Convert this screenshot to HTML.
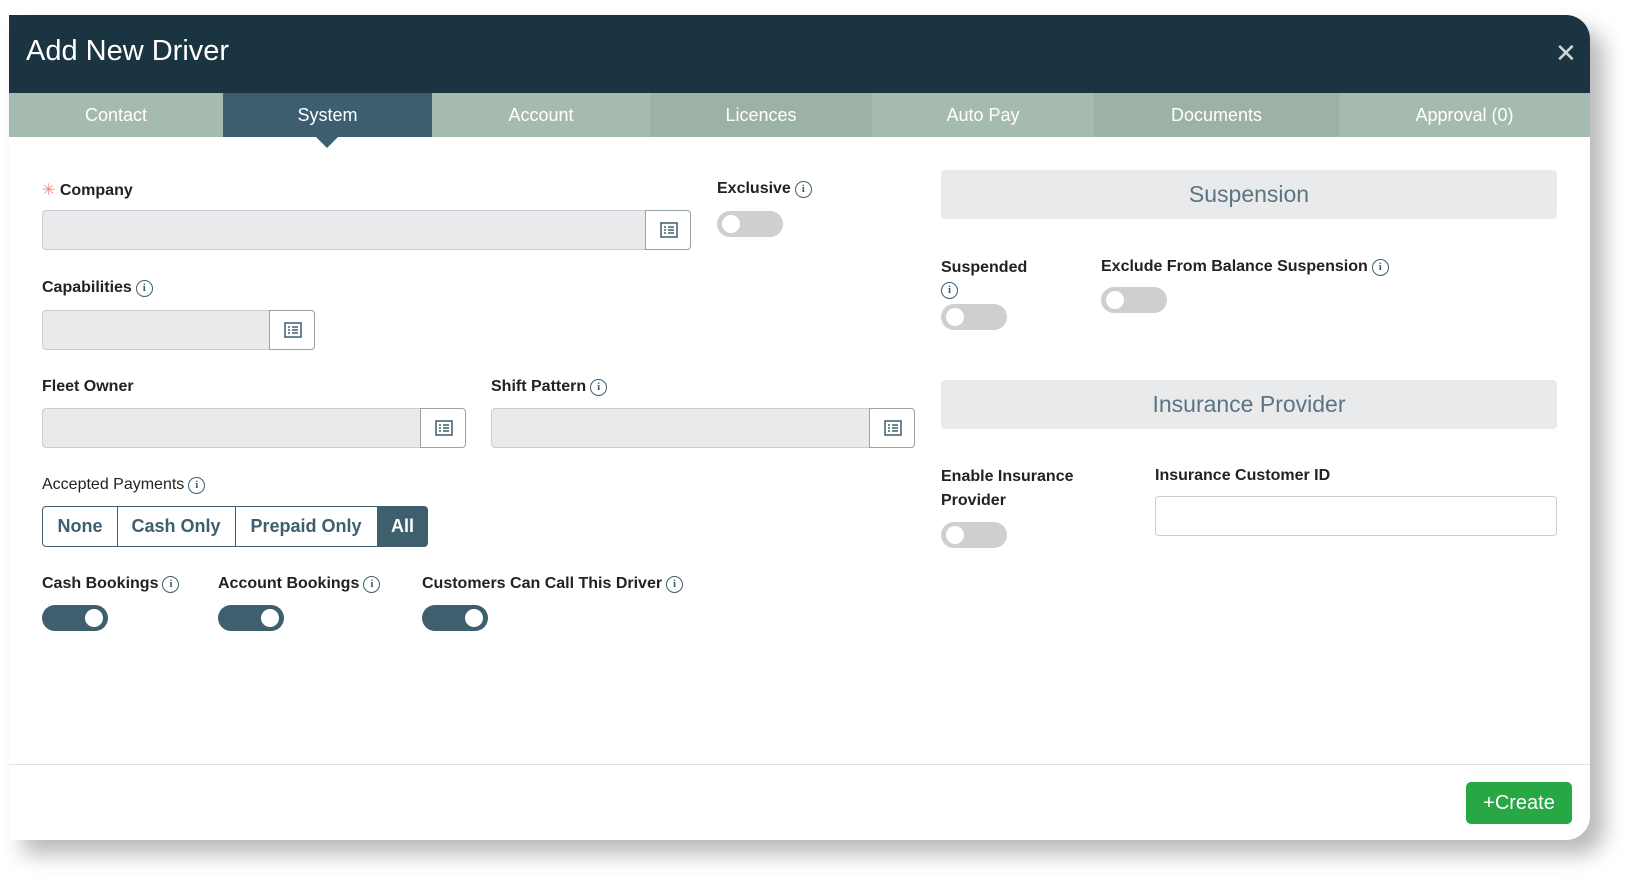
<!DOCTYPE html>
<html><head><meta charset="utf-8"><style>
*{box-sizing:border-box;margin:0;padding:0}
body{width:1637px;height:888px;background:#fff;font-family:"Liberation Sans",sans-serif;position:relative;overflow:hidden}
.modal{position:absolute;left:9px;top:15px;width:1581px;height:825px;background:#fff;border-radius:0 24px 24px 0;box-shadow:14px 14px 22px rgba(0,0,0,.28);overflow:hidden}
.hdr{position:absolute;left:0;top:0;width:100%;height:78px;background:#1b3441}
.title{position:absolute;left:17px;top:20px;color:#fff;font-size:29px}
.x{position:absolute;left:1546px;top:24px;color:#cfd7db;font-size:26px;font-weight:normal;font-family:"DejaVu Sans",sans-serif}
.tab{position:absolute;top:78px;height:44px;color:#fff;font-size:18px;text-align:center;line-height:44px;background:#a6bbb0}
.ab{position:absolute;font-size:16px;font-weight:bold;color:#222}
.inp{position:absolute;background:#e8eaec;border:1px solid #c9cdd1;border-radius:4px}
.btn{position:absolute;top:-1px;right:-1px;bottom:-1px;width:46px;background:#fff;border:1px solid #9aa3aa;border-radius:0 4px 4px 0}
.btn svg{position:absolute;left:14px;top:11px}
.tg{position:absolute;width:66px;height:26px;border-radius:13px;background:#cfcfcf}
.tg::after{content:"";position:absolute;left:5px;top:4px;width:18px;height:18px;border-radius:50%;background:#fff}
.tg.on{background:#3d5f6e}.tg.on::after{left:43px}
.i{display:inline-block;width:17px;height:17px;border:1px solid #3d5f6e;border-radius:50%;font:bold 11px "Liberation Serif",serif;color:#3d5f6e;text-align:center;line-height:15px;vertical-align:1px;margin-left:4px}
.sec{position:absolute;left:932px;width:616px;height:49px;background:#e8eaec;border-radius:4px;color:#5c7480;font-size:23px;text-align:center;line-height:49px}
.seg{position:absolute;top:491px;height:41px;border:1px solid #3d5f6e;color:#3d5f6e;font-size:18px;font-weight:bold;text-align:center;line-height:39px}
</style></head><body>
<div class="modal">
<div class="hdr"><div class="title">Add New Driver</div><div class="x">✕</div></div>
<div class="tab" style="left:0;width:214px">Contact</div>
<div class="tab" style="left:214px;width:209px;background:#3d5e6e">System</div>
<div style="position:absolute;left:307px;top:122px;border-left:11px solid transparent;border-right:11px solid transparent;border-top:11px solid #3d5e6e"></div>
<div class="tab" style="left:423px;width:218px">Account</div>
<div class="tab" style="left:641px;width:222px;background:#9cb2a6">Licences</div>
<div class="tab" style="left:863px;width:222px">Auto Pay</div>
<div class="tab" style="left:1085px;width:245px;background:#9cb2a6">Documents</div>
<div class="tab" style="left:1330px;width:251px">Approval (0)</div>

<div class="ab" style="left:33px;top:165px"><span style="color:#e88;font-weight:normal">✳</span> Company</div>
<div class="inp" style="left:33px;top:195px;width:649px;height:40px"><div class="btn"><svg width="18" height="16"><rect x="1" y="1" width="16" height="14" fill="none" stroke="#3d5f6e" stroke-width="1.5"/><path d="M4 5h2M8 5h6M4 8h2M8 8h6M4 11h2M8 11h6" stroke="#3d5f6e" stroke-width="1.5"/></svg></div></div>
<div class="ab" style="left:708px;top:165px">Exclusive<span class="i">i</span></div>
<div class="tg" style="left:708px;top:196px"></div>

<div class="ab" style="left:33px;top:264px">Capabilities<span class="i">i</span></div>
<div class="inp" style="left:33px;top:295px;width:273px;height:40px"><div class="btn"><svg width="18" height="16"><rect x="1" y="1" width="16" height="14" fill="none" stroke="#3d5f6e" stroke-width="1.5"/><path d="M4 5h2M8 5h6M4 8h2M8 8h6M4 11h2M8 11h6" stroke="#3d5f6e" stroke-width="1.5"/></svg></div></div>

<div class="ab" style="left:33px;top:363px">Fleet Owner</div>
<div class="inp" style="left:33px;top:393px;width:424px;height:40px"><div class="btn"><svg width="18" height="16"><rect x="1" y="1" width="16" height="14" fill="none" stroke="#3d5f6e" stroke-width="1.5"/><path d="M4 5h2M8 5h6M4 8h2M8 8h6M4 11h2M8 11h6" stroke="#3d5f6e" stroke-width="1.5"/></svg></div></div>
<div class="ab" style="left:482px;top:363px">Shift Pattern<span class="i">i</span></div>
<div class="inp" style="left:482px;top:393px;width:424px;height:40px"><div class="btn"><svg width="18" height="16"><rect x="1" y="1" width="16" height="14" fill="none" stroke="#3d5f6e" stroke-width="1.5"/><path d="M4 5h2M8 5h6M4 8h2M8 8h6M4 11h2M8 11h6" stroke="#3d5f6e" stroke-width="1.5"/></svg></div></div>

<div class="ab" style="left:33px;top:461px;font-weight:normal;color:#222">Accepted Payments<span class="i">i</span></div>
<div class="seg" style="left:33px;width:76px;border-radius:4px 0 0 4px">None</div>
<div class="seg" style="left:108px;width:119px;border-left:none">Cash Only</div>
<div class="seg" style="left:226px;width:143px;border-left:none">Prepaid Only</div>
<div class="seg" style="left:368px;width:51px;background:#3d5f6e;color:#fff;border-radius:0 4px 4px 0">All</div>

<div class="ab" style="left:33px;top:560px">Cash Bookings<span class="i">i</span></div>
<div class="tg on" style="left:33px;top:590px"></div>
<div class="ab" style="left:209px;top:560px">Account Bookings<span class="i">i</span></div>
<div class="tg on" style="left:209px;top:590px"></div>
<div class="ab" style="left:413px;top:560px">Customers Can Call This Driver<span class="i">i</span></div>
<div class="tg on" style="left:413px;top:590px"></div>

<div class="sec" style="top:155px">Suspension</div>
<div class="ab" style="left:932px;top:242px;line-height:22px">Suspended<br><span class="i" style="margin:0">i</span></div>
<div class="tg" style="left:932px;top:289px"></div>
<div class="ab" style="left:1092px;top:243px">Exclude From Balance Suspension<span class="i">i</span></div>
<div class="tg" style="left:1092px;top:272px"></div>

<div class="sec" style="top:365px">Insurance Provider</div>
<div class="ab" style="left:932px;top:450px;line-height:24px">Enable Insurance<br>Provider</div>
<div class="tg" style="left:932px;top:507px"></div>
<div class="ab" style="left:1146px;top:452px">Insurance Customer ID</div>
<div style="position:absolute;left:1146px;top:481px;width:402px;height:40px;border:1px solid #c9cdd1;border-radius:4px"></div>

<div style="position:absolute;left:0;top:749px;width:100%;height:1px;background:#e2e2e2"></div>
<div style="position:absolute;left:1457px;top:767px;width:106px;height:42px;background:#28a745;border-radius:5px;color:#fff;font-size:20px;line-height:42px;text-align:center">+Create</div>
</div>
</body></html>
